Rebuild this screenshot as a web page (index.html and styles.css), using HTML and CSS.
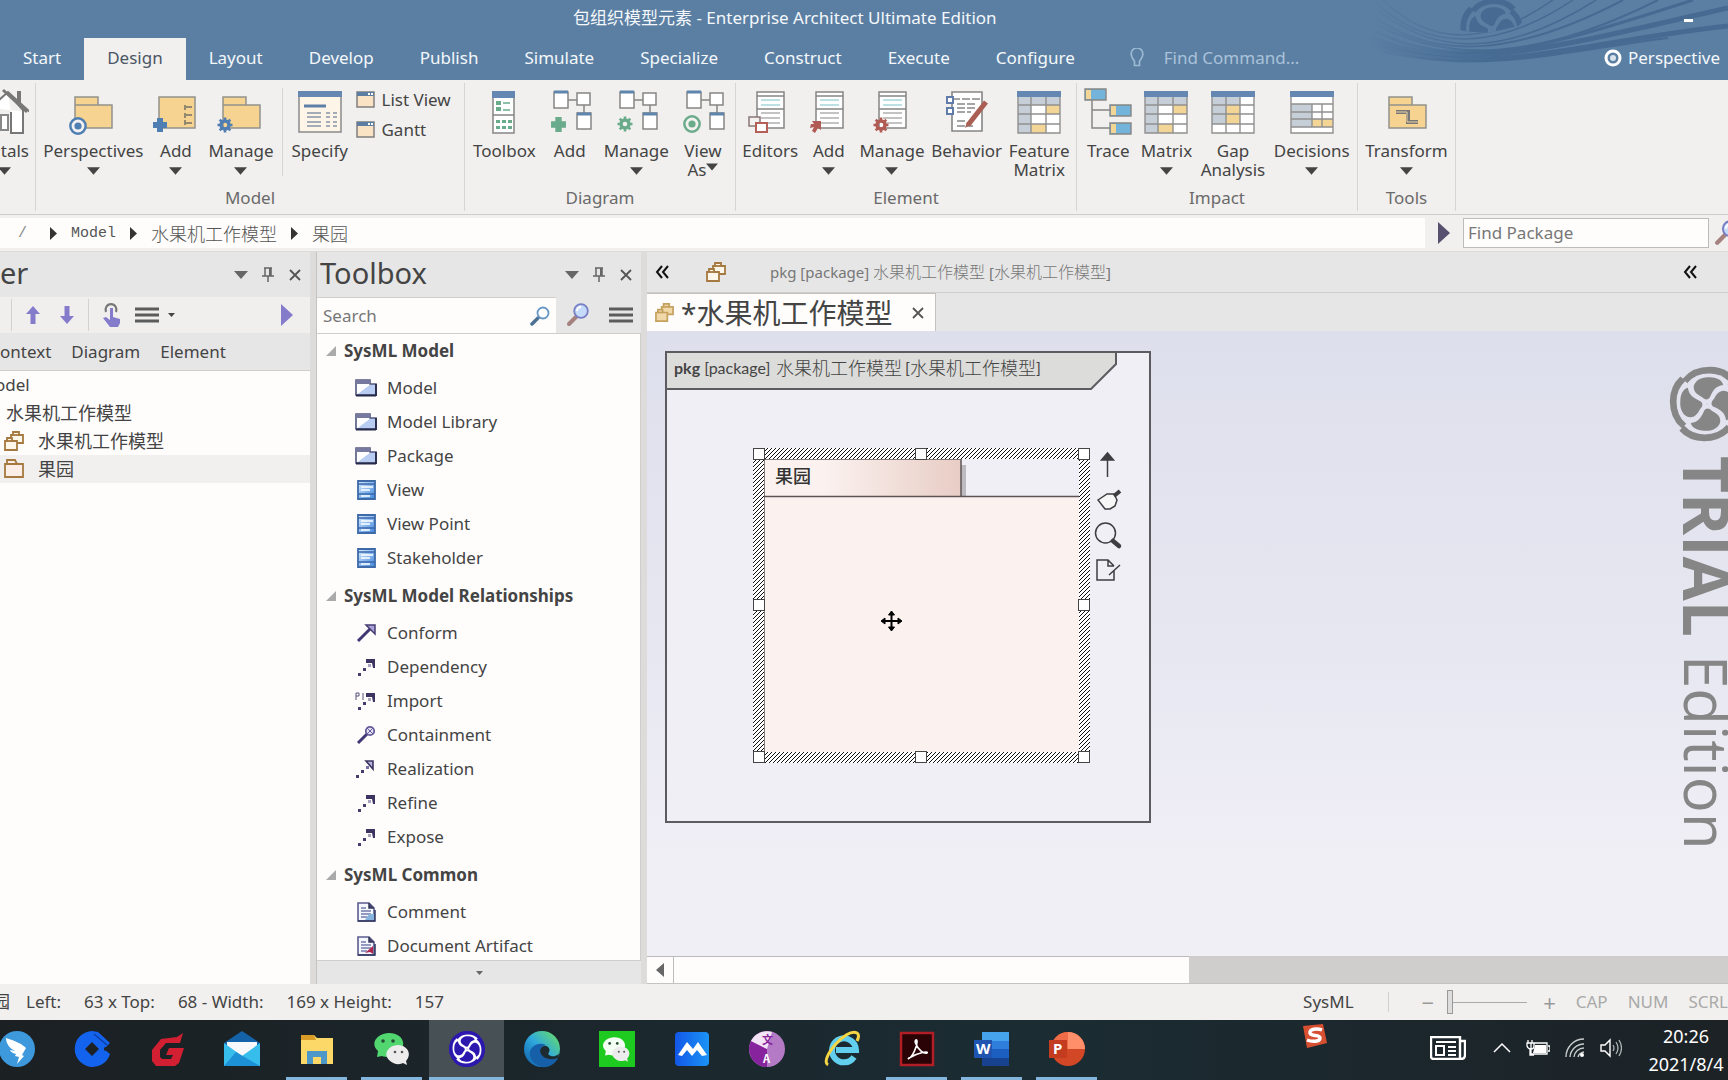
FILE: index.html
```html
<!DOCTYPE html>
<html lang="zh-CN">
<head>
<meta charset="utf-8">
<title>包组织模型元素 - Enterprise Architect Ultimate Edition</title>
<link rel="stylesheet" href="styles.css">
</head>
<body>
<svg class="defs" aria-hidden="true">
  <defs>
    <linearGradient id="gFold" x1="0" y1="0" x2="1" y2="1"><stop offset=".5" stop-color="#fff"/><stop offset=".52" stop-color="#b9cdf2"/></linearGradient>
    <linearGradient id="gView" x1="0" y1="0" x2="1" y2="1"><stop offset="0" stop-color="#d8ecff"/><stop offset="1" stop-color="#3f86dc"/></linearGradient>
    <linearGradient id="gEdge" x1="0" y1="1" x2="1" y2="0"><stop offset="0" stop-color="#0d5aa8"/><stop offset=".5" stop-color="#2fa9dc"/><stop offset="1" stop-color="#6fe35c"/></linearGradient>
    <linearGradient id="gTab" x1="0" x2="1"><stop offset=".3" stop-color="#fbf2f0"/><stop offset="1" stop-color="#e8cdc5"/></linearGradient>
    <linearGradient id="gVip" x1="0" x2="1"><stop offset="0" stop-color="#1257e8"/><stop offset="1" stop-color="#1b94f5"/></linearGradient>
    <linearGradient id="gSwirl" gradientUnits="userSpaceOnUse" x1="0" x2="130" y1="0" y2="0"><stop offset="0" stop-color="#41668f" stop-opacity="0"/><stop offset="1" stop-color="#41668f"/></linearGradient>
    <clipPath id="logoClip"><path d="M60 0h120L150 26 120 33 96 31 60 20z"/></clipPath>
    <pattern id="hatch" width="4" height="4" patternUnits="userSpaceOnUse"><rect width="4" height="4" fill="#fff"/><path d="M3 0h1v1H3zM2 1h1v1H2zM1 2h1v1H1zM0 3h1v1H0z" fill="#111" shape-rendering="crispEdges"/></pattern>
    <symbol id="folder" viewBox="0 0 48 48"><path d="M6 17V9h23v8M6 17h37v23H6z" fill="#f6d390" stroke="#93938c" stroke-width="1.5"/></symbol>
    <symbol id="plus" viewBox="0 0 16 16"><path d="M5 1h6v4h4v6h-4v4H5v-4H1V5h4z" fill="currentColor"/></symbol>
    <symbol id="gear" viewBox="0 0 16 16"><circle cx="8" cy="8" r="4" fill="none" stroke="currentColor" stroke-width="3.4"/><path d="M8 .5v3M8 12.500v3M.5 8h3M12.500 8h3M2.700 2.700l2 2M11.300 11.300l2 2M13.300 2.700l-2 2M4.700 11.300l-2 2" stroke="currentColor" stroke-width="2.600"/></symbol>
    <symbol id="target" viewBox="0 0 16 16"><circle cx="8" cy="8" r="6.800" fill="#f3f1ef" stroke="currentColor" stroke-width="2.200"/><circle cx="8" cy="8" r="3.200" fill="currentColor"/></symbol>
    <symbol id="nodes" viewBox="0 0 48 48"><path d="M22 12h9M38 17v8" stroke="#858585" stroke-width="1.500"/><g fill="#fff" stroke="#858585" stroke-width="1.500"><path d="M8 4h14v16H8zM31 5h13v12H31zM31 25h14v16H31z"/></g><path d="M8 4h14M31 26h14" stroke="#5f85ae" stroke-width="3"/></symbol>
    <symbol id="doc" viewBox="0 0 48 48"><path d="M11 4h27v36H11z" fill="#fff" stroke="#858585" stroke-width="1.500"/><path d="M11 8h27M11 21h27" stroke="#858585" stroke-width="1.500"/><path d="M15 12h19M15 17h19" stroke="#a6d6da" stroke-width="1.500"/><path d="M15 25h19M15 30h19M15 35h19" stroke="#b0b0b0" stroke-width="1.500"/></symbol>
    <symbol id="matrix" viewBox="0 0 48 48"><path d="M3 3h42v42H3z" fill="#fff"/><path d="M3 8h13v37H3zM16 8h29v9H16z" fill="#c6ced7"/><path d="M31 17h14v9H31zM16 36h15v9H16z" fill="#f3d695"/><path d="M3 8V45h42V8M3 17h42M3 26h42M3 36h42M16 8v37M31 8v37" fill="none" stroke="#909090" stroke-width="1.400"/><path d="M2 3h44v6H2z" fill="#6488b2"/></symbol>
    <symbol id="win" viewBox="0 0 20 18"><path d="M1 1h17v15H1z" fill="#fae3c4" stroke="#807f7f" stroke-width="1.500"/><path d="M1 1h17v4H1z" fill="#5e7da2"/><path d="M12 2h2v2h-2zM15 2h2v2h-2z" fill="#fff"/></symbol>
    <symbol id="pin" viewBox="0 0 14 16"><path d="M3 1h8M4 1v8M10 1v8M1 9h12M7 9v6" stroke="#666" stroke-width="1.500" fill="none"/><path d="M8 1h2v8H8z" fill="#666"/></symbol>
    <symbol id="cross" viewBox="0 0 14 14"><path d="M2 2l10 10M12 2L2 12" stroke="#555" stroke-width="1.800"/></symbol>
    <symbol id="caret" viewBox="0 0 14 8"><path d="M0 0h14L7 8z" fill="currentColor"/></symbol>
    <symbol id="play" viewBox="0 0 12 22"><path d="M0 0l12 11L0 22z" fill="currentColor"/></symbol>
    <symbol id="bars" viewBox="0 0 24 18"><path d="M0 3h24M0 9h24M0 15h24" stroke="#5c5c5c" stroke-width="2.800"/></symbol>
    <symbol id="diagrams" viewBox="0 0 20 20"><g fill="var(--sheet, #fdf6ea)" stroke="currentColor" stroke-width="1.800"><path d="M7 12V4h2V1h6v3h4v8z"/><path d="M9 4h6"/><path d="M1 19v-9h2V7h5v3h5v9z"/><path d="M3 10h5"/></g></symbol>
    <symbol id="lens" viewBox="0 0 24 24"><path d="M3 21l8-8" stroke="#a5827f" stroke-width="4" stroke-linecap="round"/><circle cx="15" cy="8" r="6.800" fill="#c6dafa" stroke="#777fc4" stroke-width="1.800"/><path d="M11 8a4 4 0 0 1 4-4" stroke="#fff" stroke-width="2" fill="none"/></symbol>
    <symbol id="find" viewBox="0 0 20 20"><path d="M2 18l6-6" stroke="#4c7194" stroke-width="3.500" stroke-linecap="round"/><circle cx="13" cy="7" r="5.500" fill="#fff" stroke="#6797c4" stroke-width="1.800"/></symbol>
    <symbol id="pkg" viewBox="0 0 22 20"><path d="M1 17V2h14v4h6v11z" fill="url(#gFold)" stroke="#53587f" stroke-width="1.600"/><path d="M1 2h14v4H1z" fill="#77799f"/><path d="M1 17.500h20M21 6v12" stroke="#252b48" stroke-width="1.800"/></symbol>
    <symbol id="view" viewBox="0 0 22 20"><path d="M3 1h17v18H3z" fill="url(#gView)" stroke="#3e6ba8" stroke-width="1.800"/><path d="M3 4h17M3 14h17" stroke="#3a67ad" stroke-width="1.400"/><path d="M6 7h12M6 10h9M6 16h9" stroke="#fff" stroke-width="1.500"/></symbol>
    <symbol id="solid" viewBox="0 0 22 20"><path d="M3 18L15 6" stroke="#3f3874" stroke-width="3"/><path d="M11 2h9v9l-3-3-3-3z" fill="#aaa2d8" stroke="#453d72" stroke-width="1.500"/></symbol>
    <symbol id="dash" viewBox="0 0 22 20"><path d="M3 16h3v3H3zM8 11h3v3H8z" fill="#453d6e"/><path d="M13 7h3v3h-3z" fill="#aaa2bc"/><path d="M11 2h9v9h-2l-1-5h-6z" fill="#3c3562"/></symbol>
    <symbol id="realize" viewBox="0 0 22 20"><path d="M1 16h3v3H1zM6 11h3v3H6z" fill="#453d6e"/><path d="M11 7h3v3h-3z" fill="#7970ab"/><path d="M11 2h7v8z" fill="#bab4df" stroke="#3c3562" stroke-width="1.600"/></symbol>
    <symbol id="contain" viewBox="0 0 22 20"><path d="M3 18l9-9" stroke="#3f3874" stroke-width="3"/><circle cx="15" cy="6" r="4.200" fill="#e4e2f4" stroke="#655b99" stroke-width="1.800"/><path d="M12 3l6 6M18 3l-6 6" stroke="#655b99"/></symbol>
    <symbol id="note" viewBox="0 0 22 20"><path d="M3 1h11l5 5v13H3z" fill="#f5f7ff" stroke="#5a5c8d" stroke-width="1.600"/><path d="M14 1v5h5" fill="#444668" stroke="#34365b" stroke-width="1.500"/><path d="M6 6h5M6 9h10M6 12h10M6 15h6" stroke="#747baa" stroke-width="1.400"/><path d="M3 19h17V8" fill="none" stroke="#2e355e" stroke-width="1.500"/></symbol>
    <symbol id="ea" viewBox="-42 -42 84 84">
      <g fill="currentColor"><path id="lobe" d="M0 0L-28 -16L-25 -27Q-15 -39 3 -39Q19 -39 29 -28L22 -20Z"/><use href="#lobe" transform="rotate(90)"/><use href="#lobe" transform="rotate(180)"/><use href="#lobe" transform="rotate(270)"/></g>
      <g class="gap" transform="scale(.82)"><use href="#lobe"/><use href="#lobe" transform="rotate(90)"/><use href="#lobe" transform="rotate(180)"/><use href="#lobe" transform="rotate(270)"/></g>
      <g fill="currentColor"><path id="petal" d="M-14 -18C-13 -25 -5 -29 3 -28C10 -28 16 -25 17 -20C9 -19 6 -14 3 -7C1 -4 -2 -4 -5 -7C-8 -9 -14 -11 -14 -18Z"/><use href="#petal" transform="rotate(90)"/><use href="#petal" transform="rotate(180)"/><use href="#petal" transform="rotate(270)"/></g>
    </symbol>
    <symbol id="chat" viewBox="0 0 38 38"><path d="M4 27l1-6C-4 13 5 3 16 3s19 9 11 18-18 5-18 5z" fill="var(--chat)"/><circle cx="10" cy="11" r="1.800" fill="#264e35"/><circle cx="20" cy="11" r="1.800" fill="#264e35"/><path d="M34 35l-1-4c7-8 0-16-8-16s-16 8-9 15 14 3 14 3z" fill="#ececec"/><circle cx="22" cy="22" r="1.300" fill="#555"/><circle cx="29" cy="22" r="1.300" fill="#555"/></symbol>
  </defs>
</svg>

<header class="titlebar">
  <svg class="swirl" viewBox="0 0 360 80" aria-hidden="true"><g fill="none" stroke="url(#gSwirl)"><path d="M15 0C65 48 120 45 185 0M5 0C60 54 130 50 205 0M0 2C65 60 140 56 228 0" stroke-width="1.500"/><path d="M0 12C65 64 150 55 255 0M0 20C80 66 170 60 290 0" stroke-width="2"/><path d="M0 28C90 74 170 50 325 0" stroke-width="3"/><path d="M0 36C90 76 190 46 360 8" stroke-width="5"/><path d="M0 42C110 82 210 42 360 26" stroke-width="5"/><path d="M0 48C110 78 200 50 300 38" stroke-width="2"/></g><g color="#41668f" clip-path="url(#logoClip)"><use href="#ea" x="90" y="-4" width="68" height="68"/></g></svg>
  <h1 class="app-title">包组织模型元素 - Enterprise Architect Ultimate Edition</h1>
  <button class="minimize" aria-label="Minimize"></button>
  <nav class="tabs">
    <button>Start</button><button class="on">Design</button><button>Layout</button><button>Develop</button><button>Publish</button><button>Simulate</button><button>Specialize</button><button>Construct</button><button>Execute</button><button>Configure</button>
    <label class="command"><svg width="14" height="20" viewBox="0 0 16 24"><path d="M5 16C1 11 1 8 1 7a7 7 0 0 1 14 0c0 2-1 5-4 9v5H5z" fill="none" stroke="#9bb9d2" stroke-width="2"/></svg><input aria-label="Find Command" placeholder="Find Command..."></label>
    <button class="perspective"><svg width="18" height="18" viewBox="0 0 18 18"><circle cx="9" cy="9" r="7" fill="none" stroke="#fff" stroke-width="3"/><circle cx="9" cy="9" r="3" fill="#d7e2ec"/></svg>Perspective</button>
  </nav>
</header>

<section class="ribbon">
  <div class="group g-cut"><div class="tools"><button class="tool"><svg class="ic" viewBox="0 0 48 48"><path d="M9 20L27 4l22 20M30 24v21h12V22L27 5" fill="#fff" stroke="#777" stroke-width="2"/><path d="M38 3v12" stroke="#777" stroke-width="4"/><path d="M22 2l24 22" stroke="#777" stroke-width="3"/><path d="M20 27h7v15h-7z" fill="#fff" stroke="#888" stroke-width="2"/></svg>tals<svg class="car"><use href="#caret"/></svg></button></div></div>
  <div class="group g-model"><div class="tools">
    <button class="tool"><svg class="ic blue" viewBox="0 0 48 48"><use href="#folder"/><use href="#target" x="0" y="29" width="18" height="18"/></svg>Perspectives<svg class="car"><use href="#caret"/></svg></button>
    <button class="tool"><svg class="ic blue" viewBox="0 0 48 48"><path d="M7 9h36v31H7z" fill="#f6d390" stroke="#93938c" stroke-width="1.500"/><path d="M33 17v5M33 19h7M33 25v5M33 27h7M33 32v5M33 35h7" stroke="#93896f" stroke-width="2"/><use href="#plus" x="0" y="29" width="16" height="16"/></svg>Add<svg class="car"><use href="#caret"/></svg></button>
    <button class="tool"><svg class="ic blue" viewBox="0 0 48 48"><use href="#folder"/><use href="#gear" x="0" y="29" width="16" height="16"/></svg>Manage<svg class="car"><use href="#caret"/></svg></button>
    <span class="rule"></span>
    <button class="tool"><svg class="ic" viewBox="0 0 48 48"><path d="M3 4h42v40H3z" fill="#fdf5e8" stroke="#8b8b8b" stroke-width="1.500"/><path d="M2 3h44v6H2z" fill="#6488b2"/><path d="M8 18h22" stroke="#5e7fa7" stroke-width="3"/><path d="M11 25h14M11 29h14M11 34h14M11 38h14M30 25h4M37 25h4M30 29h4M37 29h4M30 34h4M37 34h4M30 38h4M37 38h4" stroke="#8795a6" stroke-width="1.600"/></svg>Specify</button>
    <div class="pair"><button><svg width="20" height="18"><use href="#win"/></svg>List View</button><button><svg width="20" height="18"><use href="#win"/></svg>Gantt</button></div>
  </div><h2>Model</h2></div>
  <div class="group g-diagram"><div class="tools">
    <button class="tool"><svg class="ic" viewBox="0 0 48 48"><path d="M13 4h21v41H13zM13 27h21" fill="#fff" stroke="#858585" stroke-width="1.500"/><path d="M12 3h23v7H12z" fill="#6488b2"/><path d="M16 13h5v4h-5zM16 19h5v4h-5zM16 32h4v3h-4zM22 32h4v3h-4zM28 32h4v3h-4zM16 38h4v3h-4zM22 38h4v3h-4zM28 38h4v3h-4z" fill="#6aab8b"/><path d="M23 15h7M23 22h7" stroke="#6aab8b" stroke-width="1.500"/></svg>Toolbox</button>
    <button class="tool"><svg class="ic green" viewBox="0 0 48 48"><use href="#nodes"/><use href="#plus" x="4" y="28" width="17" height="17"/></svg>Add</button>
    <button class="tool"><svg class="ic green" viewBox="0 0 48 48"><use href="#nodes"/><use href="#gear" x="5" y="28" width="16" height="16"/></svg>Manage<svg class="car"><use href="#caret"/></svg></button>
    <button class="tool"><svg class="ic green" viewBox="0 0 48 48"><use href="#nodes"/><use href="#target" x="4" y="27" width="18" height="18"/></svg>View<span>As<svg class="car-in"><use href="#caret"/></svg></span></button>
  </div><h2>Diagram</h2></div>
  <div class="group g-element"><div class="tools">
    <button class="tool"><svg class="ic" viewBox="0 0 48 48"><use href="#doc"/><path d="M3 29h11v9H3z" fill="#f3f1ef" stroke="#8b7777" stroke-width="1.500"/><path d="M10 35h11v9H10z" fill="#fff" stroke="#b55f57" stroke-width="2"/></svg>Editors</button>
    <button class="tool"><svg class="ic red" viewBox="0 0 48 48"><use href="#doc"/><path d="M7 33h9v9l-3-2-3 5-3-2 2-4-4 1 1-4h3z" fill="#b15b54"/></svg>Add<svg class="car"><use href="#caret"/></svg></button>
    <button class="tool"><svg class="ic red" viewBox="0 0 48 48"><use href="#doc"/><use href="#gear" x="5" y="29" width="16" height="16"/></svg>Manage<svg class="car"><use href="#caret"/></svg></button>
    <button class="tool"><svg class="ic" viewBox="0 0 48 48"><path d="M9 4h30v39H9z" fill="#fff" stroke="#858585" stroke-width="1.600"/><path d="M9 11h30M14 16h19M14 20h19M14 24h14M14 33h10M14 38h16" stroke="#888" stroke-width="1.500" stroke-dasharray="8 2"/><path d="M4 9h6v6H4zM4 20h6v6H4z" fill="#fff" stroke="#617ca9" stroke-width="2"/><path d="M25 37l18-23" stroke="#a95f54" stroke-width="5"/><path d="M22 40l2-6 3 3z" fill="#a95f54"/></svg>Behavior</button>
    <button class="tool"><svg class="ic"><use href="#matrix"/></svg>Feature<span>Matrix</span></button>
  </div><h2>Element</h2></div>
  <div class="group g-impact"><div class="tools">
    <button class="tool"><svg class="ic" viewBox="0 0 48 48"><path d="M8 12v28h18M8 22h18" fill="none" stroke="#858585" stroke-width="1.500"/><g stroke="#858585" stroke-width="1.400" fill="#74b4db"><path d="M1 1h21v11H1zM26 17h21v11H26zM26 35h21v11H26z"/></g><path d="M2 2h5v9H2zM27 18h5v9h-5zM27 36h5v9h-5z" fill="#f3d695"/></svg>Trace</button>
    <button class="tool"><svg class="ic"><use href="#matrix"/></svg>Matrix<svg class="car"><use href="#caret"/></svg></button>
    <button class="tool"><svg class="ic" viewBox="0 0 48 48"><path d="M3 3h42v42H3z" fill="#fff"/><path d="M3 8h28v9H3zM3 17h14v19H3z" fill="#c6ced7"/><path d="M17 17h14v19H17z" fill="#f3d695"/><path d="M3 8v37h42V8M3 17h42M3 26h42M3 36h42M17 8v37M31 8v37" fill="none" stroke="#909090" stroke-width="1.400"/><path d="M2 3h44v6H2z" fill="#6488b2"/></svg>Gap<span>Analysis</span></button>
    <button class="tool"><svg class="ic" viewBox="0 0 48 48"><path d="M3 3h42v42H3z" fill="#fff"/><path d="M3 16h21v23H3z" fill="#c6ced7"/><path d="M24 31h21v8H24z" fill="#f3d695"/><path d="M3 8v37h42V8M3 16h42M3 24h42M3 31h42M3 39h42M24 16v23M34 16v23" fill="none" stroke="#909090" stroke-width="1.400"/><path d="M2 3h44v6H2z" fill="#6488b2"/></svg>Decisions<svg class="car"><use href="#caret"/></svg></button>
  </div><h2>Impact</h2></div>
  <div class="group g-tools"><div class="tools">
    <button class="tool"><svg class="ic" viewBox="0 0 48 48"><use href="#folder"/><path d="M13 24h12v10h10" fill="none" stroke="#777" stroke-width="4"/><path d="M13 24h11v10h11" fill="none" stroke="#f0d4a0" stroke-width="1"/></svg>Transform<svg class="car"><use href="#caret"/></svg></button>
  </div><h2>Tools</h2></div>
</section>

<section class="pathbar">
  <nav class="crumbs"><span class="slash">/</span><svg class="sep"><use href="#play"/></svg><a href="#model">Model</a><svg class="sep"><use href="#play"/></svg><a href="#work" class="cn">水果机工作模型</a><svg class="sep"><use href="#play"/></svg><a href="#orchard" class="cn">果园</a></nav>
  <button class="go" aria-label="Go"><svg width="12" height="22"><use href="#play"/></svg></button>
  <input class="find" aria-label="Find Package" placeholder="Find Package">
  <button class="lens-cut" aria-label="Find"><svg width="26" height="26"><use href="#lens"/></svg></button>
</section>

<main class="work">
  <aside class="browser">
    <header class="pane-head"><h2>er</h2><button aria-label="Menu"><svg width="14" height="8"><use href="#caret"/></svg></button><button aria-label="Pin"><svg width="14" height="16"><use href="#pin"/></svg></button><button aria-label="Close"><svg width="14" height="14"><use href="#cross"/></svg></button></header>
    <div class="pane-tools">
      <span class="vr"></span>
      <button aria-label="Up"><svg width="14" height="18" viewBox="0 0 14 18"><path d="M7 0l7 8H9.500v10h-5V8H0z" fill="#857bcb"/></svg></button>
      <button aria-label="Down"><svg width="14" height="18" viewBox="0 0 14 18"><path d="M7 18l7-8H9.500V0h-5v10H0z" fill="#857bcb"/></svg></button>
      <span class="vr"></span>
      <button aria-label="Select"><svg width="18" height="24" viewBox="0 0 18 24"><path d="M3 9a5.500 5.500 0 1 1 10 0" fill="none" stroke="#777" stroke-width="2.200"/><path d="M7 5h3v9l7 2v4l-2 4H7l-7-9 3-1 4 3z" fill="#857bcb"/></svg></button>
      <button class="burger" aria-label="Options"><svg width="24" height="18"><use href="#bars"/></svg><svg width="7" height="4"><use href="#caret"/></svg></button>
      <button class="next" aria-label="Next"><svg width="12" height="22"><use href="#play"/></svg></button>
    </div>
    <nav class="pane-tabs"><button>ontext</button><button>Diagram</button><button>Element</button></nav>
    <ul class="tree">
      <li class="root">odel</li>
      <li class="l1">水果机工作模型</li>
      <li class="l2"><svg width="20" height="20"><use href="#diagrams"/></svg>水果机工作模型</li>
      <li class="l2 sel"><svg width="20" height="20" viewBox="0 0 20 20"><path d="M1 18V5h2V1h8l2 4h6v13zM1 5h12" fill="#fbeee6" stroke="currentColor" stroke-width="1.800"/></svg>果园</li>
    </ul>
  </aside>

  <aside class="toolbox">
    <header class="pane-head"><h2>Toolbox</h2><button aria-label="Menu"><svg width="14" height="8"><use href="#caret"/></svg></button><button aria-label="Pin"><svg width="14" height="16"><use href="#pin"/></svg></button><button aria-label="Close"><svg width="14" height="14"><use href="#cross"/></svg></button></header>
    <div class="search"><label><input aria-label="Search" placeholder="Search"><svg width="20" height="20"><use href="#find"/></svg></label><button aria-label="Find toolbox item"><svg width="24" height="24"><use href="#lens"/></svg></button><button aria-label="Options"><svg width="24" height="18"><use href="#bars"/></svg></button></div>
    <div class="list">
      <h3>SysML Model</h3>
      <ul><li><svg><use href="#pkg"/></svg>Model</li><li><svg><use href="#pkg"/></svg>Model Library</li><li><svg><use href="#pkg"/></svg>Package</li><li><svg><use href="#view"/></svg>View</li><li><svg><use href="#view"/></svg>View Point</li><li><svg><use href="#view"/></svg>Stakeholder</li></ul>
      <h3>SysML Model Relationships</h3>
      <ul><li><svg><use href="#solid"/></svg>Conform</li><li><svg><use href="#dash"/></svg>Dependency</li><li><svg viewBox="0 0 22 20"><use href="#dash"/><path d="M1 9V2h3v3H1M8 2v7" fill="none" stroke="#555278"/></svg>Import</li><li><svg><use href="#contain"/></svg>Containment</li><li><svg><use href="#realize"/></svg>Realization</li><li><svg><use href="#dash"/></svg>Refine</li><li><svg><use href="#dash"/></svg>Expose</li></ul>
      <h3>SysML Common</h3>
      <ul><li><svg viewBox="0 0 22 20"><use href="#note"/><path d="M14 12h5v6h-9z" fill="#86b4df"/></svg>Comment</li><li><svg viewBox="0 0 22 20"><use href="#note"/><path d="M18 10v8l-3-2-5 1z" fill="#b0274d"/></svg>Document Artifact</li></ul>
    </div>
    <button class="more" aria-label="Scroll down"><svg width="7" height="4"><use href="#caret"/></svg></button>
  </aside>

  <section class="editor">
    <header class="doc-head"><button aria-label="Collapse"><svg width="14" height="14" viewBox="0 0 14 14"><path d="M7 1L2 7l5 6M13 1L8 7l5 6" fill="none" stroke="#111" stroke-width="2"/></svg></button><svg class="doc-ic" width="20" height="20"><use href="#diagrams"/></svg><span class="doc-path">pkg [package] <b>水果机工作模型</b> [<b>水果机工作模型</b>]</span><button class="end" aria-label="Collapse right"><svg width="14" height="14" viewBox="0 0 14 14"><path d="M7 1L2 7l5 6M13 1L8 7l5 6" fill="none" stroke="#111" stroke-width="2"/></svg></button></header>
    <div class="doc-tabs"><div class="doc-tab"><svg width="19" height="19"><use href="#diagrams"/></svg><span>*水果机工作模型</span><button aria-label="Close tab"><svg width="14" height="14"><use href="#cross"/></svg></button></div></div>
    <div class="canvas">
      <svg class="frame" width="486" height="473" viewBox="0 0 486 473">
        <path d="M1 1h484v470H1z" fill="#f0eff6" stroke="#5b5b60" stroke-width="2"/>
        <path d="M1 1h450v12l-25 25H1z" fill="#dcdcda" stroke="#5b5b60" stroke-width="2"/>
        <text x="9" y="23" class="lat"><tspan class="bold">pkg</tspan> [package]</text><text x="111" y="24" class="han">水果机工作模型</text><text x="240" y="23" class="lat">[</text><text x="245" y="24" class="han">水果机工作模型</text><text x="371" y="23" class="lat">]</text>
        <path d="M296 114h5v32h-5z" fill="#bdbbc0"/>
        <path d="M98 145h317v257H98z" fill="#fbf2f0"/><path d="M98 108h198v37H98z" fill="url(#gTab)"/>
        <path d="M98 108h198v37M99 402V109M98 145.500h317" fill="none" stroke="#5b5555" stroke-width="1.500"/>
        <path d="M88 97h337v315H88zM99 108v293h315V108z" fill="url(#hatch)" fill-rule="evenodd"/>
        <g fill="#fff" stroke="#444" shape-rendering="crispEdges"><path d="M88.500 97.500h11v11h-11zM250.500 97.500h11v11h-11zM413.500 97.500h11v11h-11zM88.500 248.500h11v11h-11zM413.500 248.500h11v11h-11zM88.500 400.500h11v11h-11zM250.500 400.500h11v11h-11zM413.500 400.500h11v11h-11z"/></g>
        <text x="110" y="132" class="han name">果园</text>
        <g fill="none" stroke="#3e3e42" stroke-width="1.500"><path d="M442.500 126v-20"/><path d="M436.500 109l6-7 6 7z" fill="#3e3e42"/><path d="M433 149l9-6h7l3 6-2 6-5 3h-5z" fill="#f7f7f7"/><path d="M449 145l6-5" stroke-width="4"/><circle cx="440.500" cy="182" r="10"/><path d="M448 190l6 5" stroke-width="4.500" stroke-linecap="round"/><path d="M449 220v9h-17v-20h11l6 6M443 209v6h6M444 224l11-10" /></g>
        <g stroke="#000" stroke-width="2" fill="#000"><path d="M218 270h17M226.500 262v17"/><path d="M226.500 260l3 4h-6zM226.500 280l3-4h-6zM216 270l4-3v6zM237 270l-4-3v6z" stroke-width="1"/></g>
      </svg>
      <div class="mark"><svg width="80" height="80"><use href="#ea"/></svg><strong>TRIAL</strong><span>Edition</span></div>
    </div>
    <div class="hscroll"><button aria-label="Scroll left"><svg width="8" height="14" viewBox="0 0 8 14"><path d="M8 0v14L0 7z" fill="#666"/></svg></button><div class="thumb"></div></div>
  </section>
</main>

<footer class="status"><span>园</span><span>Left:</span><span>63 x Top:</span><span>68 - Width:</span><span>169 x Height:</span><span>157</span>
  <div class="right"><span class="lang">SysML</span><button aria-label="Zoom out">−</button><input type="range" aria-label="Zoom" value="0"><button aria-label="Zoom in">+</button><span class="dim">CAP</span><span class="dim">NUM</span><span class="dim">SCRL</span></div>
</footer>

<footer class="taskbar">
  <div class="apps">
    <button aria-label="DingTalk"><svg viewBox="0 0 38 38"><circle cx="19" cy="19" r="18" fill="#3d98dc"/><path d="M8 8c10 3 16 6 20 10l-4 7 2 1-7 8 2-7-4-1 1-2c-5-1-6-4-6-4l5 1c-6-3-9-8-9-13z" fill="#fff"/></svg></button>
    <button aria-label="CCB"><svg viewBox="0 0 38 38"><path fill-rule="evenodd" d="M25 2l12 11-6 6 6 5A18 18 0 1 1 19 1zM19 12l-7 7 7 7 7-7z" fill="#1463ee"/><path d="M21 4l13 11" stroke="#0b3fa8" stroke-width="1.500"/><path d="M31 19h7" stroke="#1d2529" stroke-width="3"/></svg></button>
    <button aria-label="G"><svg viewBox="0 0 38 38"><path d="M35 3l-3 10H18l-6 7v7l2 2h9l2-4h-7l3-7h15l-5 15-4 3H8l-4-5V20L13 9l16-2z" fill="#d21f31"/></svg></button>
    <button aria-label="Mail"><svg viewBox="0 0 38 38"><path d="M1 13L19 1l18 12v6H1z" fill="#1463a8"/><path d="M4 12h30v14H4z" fill="#f6f8fb"/><path d="M1 13l18 13 18-13v23H1z" fill="#37bdeb"/><path d="M1 36h36L13 22z" fill="#1d91d5"/></svg></button>
    <button class="run" aria-label="File Explorer"><svg viewBox="0 0 38 38"><path d="M3 5h13l3 3h16v26H3z" fill="#fbd868"/><path d="M3 5h13l2 5H3z" fill="#d99d27"/><path d="M9 34V21h20v13h-6v-7h-8v7z" fill="#4d98c9"/></svg></button>
    <button class="run chat1" aria-label="WeChat"><svg viewBox="0 0 38 38"><use href="#chat"/></svg></button>
    <button class="run active" aria-label="Enterprise Architect"><svg viewBox="0 0 38 38"><circle cx="19" cy="19" r="18" fill="#2c18ae"/><use href="#ea" x="0" y="0" width="38" height="38"/></svg></button>
    <button aria-label="Edge"><svg viewBox="0 0 38 38"><circle cx="19" cy="19" r="18" fill="url(#gEdge)"/><path d="M35 28c-9 3-18-1-17-8 0-4 5-5 5-5-9-4-18 3-16 11 2 7 9 12 16 11 6-1 10-5 12-9z" fill="#1660a9"/><path d="M37 20c0 5-5 7-9 6-3-1-3-2-2-4 2-3-2-7-5-6-3 1-5 4-3 8s9 7 17 4" fill="#1d2b31"/></svg></button>
    <button class="chat2" aria-label="WeChat Work"><svg viewBox="0 0 38 38"><path d="M1 1h36v36H1z" fill="#1fca20"/><use href="#chat" x="4" y="5" width="29" height="29"/></svg></button>
    <button aria-label="Meeting"><svg viewBox="0 0 38 38"><rect x="2" y="2" width="34" height="34" rx="4" fill="url(#gVip)"/><path d="M5 25l9-13 6 7 5-7 9 13-5 1-5-6-5 6-5-6-5 6z" fill="#fff"/></svg></button>
    <button aria-label="Translate"><svg viewBox="0 0 38 38"><circle cx="19" cy="19" r="18" fill="#b47ac5"/><path d="M19 19L3 11A18 18 0 0 0 19 37z" fill="#87239c"/><path d="M19 19L3 11A18 18 0 0 1 24 2z" fill="#f3e3f6"/><text x="14" y="14" class="tr">文</text><text x="15" y="33" class="tr w">A</text></svg></button>
    <button aria-label="Internet Explorer"><svg viewBox="0 0 38 38"><path d="M31 27a12 12 0 1 1 2-7H13" fill="none" stroke="#62cfee" stroke-width="6"/><path d="M5 35C-4 30 23-3 34 3c3 2 1 6 0 8" fill="none" stroke="#f5d543" stroke-width="3"/></svg></button>
    <button class="run" aria-label="Acrobat"><svg viewBox="0 0 38 38"><path d="M3 3h32v32H3z" fill="#2a0306" stroke="#b11e26" stroke-width="2.500"/><path d="M10 29c5-2 9-13 9-17s-3-2-1 2c2 6 8 10 11 9 2-2-8-1-18 5z" fill="none" stroke="#fff" stroke-width="1.700"/></svg></button>
    <button class="run" aria-label="Word"><svg viewBox="0 0 38 38"><path d="M9 2h27v34H9z" fill="#1c5fc0"/><path d="M9 2h27v9H9z" fill="#45a4eb"/><path d="M9 11h27v8H9z" fill="#2f7edb"/><path d="M9 28h27v8H9z" fill="#17428f"/><path d="M1 10h18v18H1z" fill="#1f55b0"/><text x="3" y="24" class="off">W</text></svg></button>
    <button class="run" aria-label="PowerPoint"><svg viewBox="0 0 38 38"><circle cx="20" cy="19" r="17" fill="#d24726"/><path d="M20 2a17 17 0 0 1 17 17H20z" fill="#ff8f6b"/><path d="M20 2v17H3A17 17 0 0 1 20 2z" fill="#ee6c48"/><path d="M1 10h18v18H1z" fill="#c33c20"/><text x="5" y="24" class="off">P</text></svg></button>
  </div>
  <div class="tray">
    <svg class="sogou" width="26" height="26" viewBox="0 0 26 26"><path d="M1 3l20-2 4 19-20 5z" fill="#d64f30"/><path d="M20 7c-5-2-13-1-12 3s10 1 10 5-8 4-13 2" fill="none" stroke="#fff" stroke-width="3.500"/></svg>
    <svg class="news" width="36" height="24" viewBox="0 0 36 24"><path d="M1 1h29v22H4q-3 0-3-3zM30 5h5v14q0 4-4 4h-2" fill="none" stroke="#fff" stroke-width="2.400"/><path d="M6 6h20M18 11h8M18 15h8M18 19h8M6 10h8v9H6z" fill="none" stroke="#fff" stroke-width="2"/></svg>
    <svg class="chev" width="18" height="11" viewBox="0 0 18 11"><path d="M1 10l8-8 8 8" fill="none" stroke="#fff" stroke-width="1.500"/></svg>
    <svg width="24" height="18" viewBox="0 0 24 18"><path d="M5 4h16v11H5zM22 7h2v5h-2M1 4h7v3q0 3-3 3t-4-3zM2 1v3M6 1v3M4 10v6h4" fill="none" stroke="#fff" stroke-width="1.300"/><path d="M9 6h11v8H7z" fill="#fff"/></svg>
    <svg width="20" height="20" viewBox="0 0 20 20"><path d="M1 19A18 18 0 0 1 19 1M5 19A14 14 0 0 1 19 6M9 19a10 10 0 0 1 10-9M13 19q1-4 6-5" fill="none" stroke="#c8cccd" stroke-width="1.400"/><circle cx="17" cy="17" r="2" fill="#fff"/></svg>
    <svg width="22" height="20" viewBox="0 0 22 20"><path d="M1 7h4l5-5v16l-5-5H1z" fill="none" stroke="#fff" stroke-width="1.400"/><path d="M13 7q2 3 0 6M16 4q4 6 0 12M19 2q5 8 0 16" fill="none" stroke="#aeb4b6" stroke-width="1.300"/></svg>
    <time class="clock">20:26<span>2021/8/4</span></time>
  </div>
</footer>
</body>
</html>
```
FILE: styles.css
```css
* { box-sizing: border-box; }
html, body { height: 100%; margin: 0; }
body {
  display: flex; flex-direction: column; overflow: hidden;
  font: 17px/20px "Noto Sans", "Noto Sans CJK SC", sans-serif;
  color: #444; background: #f1f0ee;
}
button, input { font: inherit; color: inherit; background: none; border: 0; padding: 0; margin: 0; }
button { display: flex; align-items: center; white-space: nowrap; }
input { outline: 0; min-width: 0; }
h1, h2, h3, ul { margin: 0; padding: 0; font: inherit; list-style: none; }
svg { flex: none; display: block; }
.defs { position: absolute; width: 0; height: 0; }
.gap { fill: var(--gap); }

/* title bar and ribbon tabs */
.titlebar { position: relative; flex: none; height: 80px; background: #5b7fa3; color: #f4f8fb; }
.swirl { position: absolute; right: 0; top: 0; width: 360px; height: 80px; opacity: .8; --gap: #5b7fa3; }
.app-title { position: relative; height: 38px; padding: 8px 0 0 573px; white-space: nowrap; }
.minimize { position: absolute; right: 35px; top: 19px; width: 9px; height: 3px; background: #fff; }
.tabs { position: relative; display: flex; height: 42px; }
.tabs > button { padding: 0 23px 2px; }
.tabs .on { background: #f1f0ee; color: #4b5564; }
.command { display: flex; align-items: center; gap: 20px; margin-left: 32px; padding-bottom: 2px; }
.command input { width: 180px; }
.command input::placeholder { color: #a9c2d9; opacity: 1; }
.tabs .perspective { margin-left: auto; gap: 6px; padding: 0 8px 2px 0; }

/* ribbon */
.ribbon { flex: none; display: flex; height: 135px; padding: 3px 0; border-bottom: 1px solid #cfcecd; }
.group { flex: none; display: flex; flex-direction: column; border-right: 1px solid #d6d5d4; }
.group h2 { text-align: center; color: #6a6a6a; line-height: 20px; }
.tools { display: flex; height: 105px; padding: 5px 3px 0; justify-content: space-around; }
.tool { flex-direction: column; justify-content: flex-start; line-height: 19px; }
.ic { width: 48px; height: 48px; margin-bottom: 5px; }
.blue { color: #4f7eb3; }
.green { color: #6aab8b; }
.red { color: #b15b54; }
.car { width: 13px; height: 8px; margin-top: 7px; color: #444; }
.car-in { display: inline-block; width: 12px; height: 8px; margin-bottom: 5px; }
.g-cut { width: 36px; }
.g-cut .tools { justify-content: flex-end; padding-right: 6px; }
.g-cut .tool { align-items: flex-end; }
.g-cut .car { margin-right: 18px; }
.g-model { width: 429px; }
.g-model .tools { padding-right: 9px; }
.g-diagram { width: 271px; }
.g-element { width: 341px; }
.g-impact { width: 281px; }
.g-tools { width: 98px; }
.rule { width: 1px; height: 88px; background: #d6d5d4; }
.pair { display: flex; flex-direction: column; gap: 10px; padding-top: 2px; }
.pair button { gap: 5px; }

/* breadcrumb bar */
.pathbar { flex: none; display: flex; height: 37px; padding: 3px 0; border-bottom: 1px solid #dcdbda; }
.crumbs { flex: 1; display: flex; align-items: center; gap: 14px; padding-left: 18px; background: #fefdfc; font: 15px "Liberation Mono", monospace; }
.crumbs a { color: #555; text-decoration: none; }
.crumbs .cn { font: 300 18px/26px "Noto Sans CJK SC", sans-serif; }
.slash { color: #888; margin-right: 9px; }
.sep { width: 7px; height: 13px; color: #333; }
.go { width: 38px; justify-content: center; color: #57506e; }
.find { width: 246px; padding: 0 4px; background: #fefdfc; border: 1px solid #bdbcbb; }
.find::placeholder, .search input::placeholder { color: #777; opacity: 1; }
.lens-cut { width: 19px; padding-left: 5px; overflow: hidden; }

/* work area */
.work { flex: 1; min-height: 0; display: flex; gap: 6px; background: #dddcda; }
.browser { flex: none; width: 310px; display: flex; flex-direction: column; background: #fefdfc; }
.pane-head { flex: none; display: flex; align-items: center; gap: 13px; height: 45px; padding-right: 8px; background: #e6e6e6; color: #666; }
.pane-head h2 { flex: 1; font-size: 29px; line-height: 40px; color: #444; padding-bottom: 4px; }
.pane-tools { flex: none; display: flex; align-items: center; gap: 20px; height: 36px; padding: 0 17px; background: #f0efee; }
.vr { width: 1px; height: 32px; margin: 0 -6px; background: #d2d1d0; }
.burger { gap: 9px; margin-left: -6px; }
.next { margin-left: auto; color: #857bcb; }
.pane-tabs { flex: none; display: flex; gap: 20px; height: 38px; background: #e6e6e6; border-bottom: 1px solid #cecdcc; }
.tree li { display: flex; align-items: center; gap: 14px; height: 28px; font-size: 18px; white-space: nowrap; }
.tree .root { font-size: 17px; margin-left: -5px; }
.tree .l1 { padding-left: 6px; }
.tree .l2 { padding-left: 4px; }
.tree svg, .doc-ic { color: #a5793f; }
.sel { background: #f1f0ef; }
.toolbox { flex: none; width: 325px; display: flex; flex-direction: column; border-left: 1px solid #c4c3c2; background: #e6e6e6; }
.toolbox .pane-head { padding-left: 3px; }
.search { flex: none; display: flex; align-items: center; gap: 19px; height: 36px; padding-right: 8px; }
.search button:first-of-type { margin-left: -9px; }
.search label { flex: 1; min-width: 0; display: flex; align-items: center; align-self: stretch; padding: 0 6px; background: #fefdfc; border-top: 1px solid #d0cfce; }
.search input { flex: 1; }
.list { flex: 1; min-height: 0; overflow: hidden; background: #fefdfc; border: 1px solid #cfcecd; border-left: 0; }
.list h3 { display: flex; align-items: center; gap: 8px; height: 33px; margin: 4px 0; padding-left: 9px; font-weight: 700; }
.list h3:first-child { margin-top: 0; }
.list h3::before { content: ""; border-left: 10px solid transparent; border-bottom: 10px solid #aaa; }
.list li { display: flex; align-items: center; gap: 10px; height: 34px; padding-left: 38px; }
.list li svg { width: 22px; height: 20px; }
.more { flex: none; justify-content: center; height: 23px; color: #666; }

/* diagram editor */
.editor { flex: 1; min-width: 0; display: flex; flex-direction: column; }
.doc-head { flex: none; display: flex; align-items: center; height: 41px; padding-left: 8px; background: #e6e6e6; border-bottom: 1px solid #cfcecd; }
.doc-ic { margin: 0 44px 0 37px; }
.doc-path { font-size: 15px; color: #777; white-space: nowrap; }
.doc-path b { font-size: 16px; font-weight: 300; }
.doc-head .end { margin: 0 31px 0 auto; }
.doc-tabs { flex: none; height: 38px; background: #e6e6e6; }
.doc-tab { display: flex; align-items: center; width: 289px; height: 38px; padding-left: 8px; background: #fefdfc; border: 1px solid #c3c2c1; border-width: 1px 1px 0 0; }
.doc-tab svg { color: #c5a15e; --sheet: #f0d8a8; }
.doc-tab span { margin: 0 19px 0 7px; font-size: 28px; line-height: 36px; white-space: nowrap; }
.canvas { flex: 1; min-height: 0; position: relative; overflow: hidden; background: linear-gradient(#dddfec, #e7e7f1 50%, #f0eff6 85%); }
.frame { position: absolute; left: 18px; top: 20px; }
.lat { font: 16px Lato, sans-serif; fill: #444; }
.bold { font-weight: 700; }
.han { font: 300 18px "Noto Sans CJK SC", sans-serif; fill: #444; }
.name { font-weight: 500; fill: #333; }
.mark { position: absolute; left: 1020px; top: 33px; display: flex; align-items: center; writing-mode: vertical-rl; color: #868686; font-family: "Open Sans", sans-serif; line-height: 80px; --gap: #e2e3ef; }
.mark strong { font-size: 64px; margin-top: 12px; }
.mark span { font-size: 60px; margin-top: 18px; }
.hscroll { flex: none; display: flex; height: 28px; background: #cfcecc; border-bottom: 1px solid #c4c3c2; }
.hscroll button { width: 27px; justify-content: center; background: #fefdfc; border-right: 1px solid #bbb; border-top: 1px solid #bbb; }
.thumb { width: 515px; background: #fefdfc; border-top: 1px solid #bbb; }

/* status bar */
.status { flex: none; display: flex; align-items: center; gap: 23px; height: 36px; white-space: pre; }
.status > span:first-child { width: 10px; margin-right: -7px; direction: rtl; overflow: hidden; }
.right { display: flex; align-items: center; margin-left: auto; }
.right button { color: #999; font-size: 22px; }
.lang { padding-right: 34px; border-right: 1px solid #d2d1d0; margin-right: 33px; }
.right input { appearance: none; width: 80px; height: 24px; margin: 0 16px 0 13px; background: linear-gradient(#aaa, #aaa) center / 100% 1px no-repeat; }
.right input::-webkit-slider-thumb { appearance: none; width: 6px; height: 24px; background: #ddd; border: 1px solid #999; }
.dim { margin-left: 20px; color: #a9a9a9; }

/* taskbar */
.taskbar { flex: none; display: flex; justify-content: space-between; height: 60px; background: linear-gradient(90deg, #1b2023, #1b2c33 60%, #1c2226); color: #fff; }
.apps { display: flex; margin-left: -21px; }
.apps button { position: relative; width: 75px; justify-content: center; padding-bottom: 2px; }
.apps svg { width: 38px; height: 42px; }
.run::after { content: ""; position: absolute; left: 7px; right: 7px; bottom: 0; height: 3px; background: #84b6dd; }
.apps .active { background: #465055; color: #2c18ae; --gap: #fff; }
.active::after { left: 0; right: 0; }
.chat1 { --chat: #51d670; }
.chat2 { --chat: #f4fff4; }
.tr { font: 700 11px "Noto Sans CJK SC", sans-serif; fill: #87239c; }
.off { font: 700 15px "Noto Sans", sans-serif; fill: #fff; }
.tr.w { fill: #fff; }
.tray { display: flex; align-items: center; gap: 15px; padding-bottom: 5px; }
.sogou { align-self: flex-start; margin: 3px 87px 0 0; }
.chev { margin-left: 12px; }
.clock { display: flex; flex-direction: column; align-items: center; width: 84px; margin-left: 7px; font-size: 18px; line-height: 28px; padding-top: 4px; }
```
